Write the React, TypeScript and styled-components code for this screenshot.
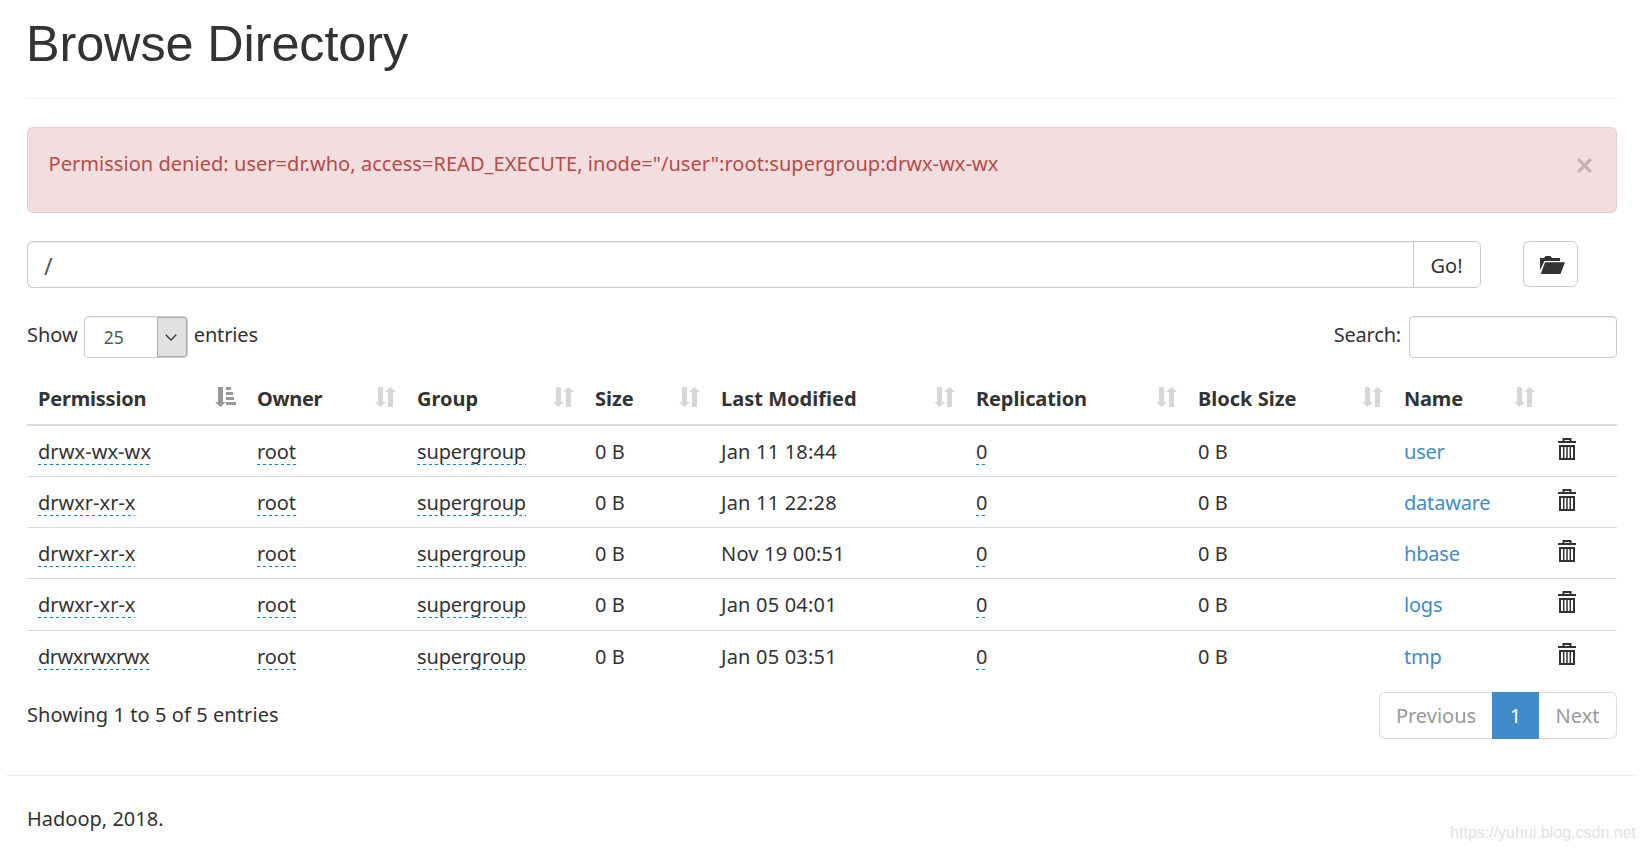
import React from "react";
import styled, { createGlobalStyle } from "styled-components";

const Global = createGlobalStyle`
  * { box-sizing: border-box; }
  body {
    margin: 0;
    background: #fff;
    color: #333;
    font: 20px/28px "Noto Sans", sans-serif;
    overflow: hidden;
  }
`;

const Page = styled.div`
  position: relative;
  height: 851px;
`;

const Container = styled.main`
  padding: 0 28px 0 27px;
`;

const Heading = styled.h1`
  margin: 0;
  height: 99px;
  padding-top: 16px;
  border-bottom: 1px solid #eee;
  font: 400 50.4px/56px "Liberation Sans", sans-serif;
  letter-spacing: -0.1px;
  text-indent: -1px;
`;

const T = styled.span<{ $ls?: number }>`
  letter-spacing: ${(p) => p.$ls ?? 0}px;
  white-space: nowrap;
`;

const Alert = styled.div`
  display: flex;
  justify-content: space-between;
  margin-top: 28px;
  height: 86px;
  padding: 22px 24px 0 20.5px;
  border: 1px solid #ebccd1;
  border-radius: 6px;
  background: #f2dede;
  color: #b94a48;
`;

const Close = styled.button`
  border: 0;
  padding: 0;
  margin-top: 8px;
  width: 15px;
  height: 15px;
  background: none;
  display: flex;
`;

const PathRow = styled.div`
  display: flex;
  align-items: flex-start;
  margin-top: 28px;
`;

const PathInput = styled.div`
  width: 1386px;
  height: 47px;
  padding: 11px 16px;
  border: 1px solid #ccc;
  border-right: 0;
  border-radius: 6px 0 0 6px;
  box-shadow: inset 0 1px 1px rgba(0, 0, 0, 0.075);
  color: #555;
  font-size: 23px;
  line-height: 26px;
`;

const Button = styled.button<{ $w: number; $h: number; $joined?: boolean }>`
  display: flex;
  align-items: center;
  justify-content: center;
  width: ${(p) => p.$w}px;
  height: ${(p) => p.$h}px;
  margin-left: ${(p) => (p.$joined ? 0 : 42)}px;
  padding: ${(p) => (p.$joined ? "2px 1px 0 0" : "2px 0 0 4px")};
  border: 1px solid #ccc;
  border-radius: ${(p) => (p.$joined ? "0 6px 6px 0" : "6px")};
  background: #fff;
  color: #333;
  font: inherit;
`;

const Controls = styled.div`
  display: flex;
  justify-content: space-between;
  margin-top: 28px;
  height: 42px;
`;

const Label = styled.label`
  display: flex;
  padding-top: 5px;
`;

const Select = styled.div`
  display: flex;
  justify-content: space-between;
  width: 104px;
  height: 42px;
  margin: -5px 6px 0;
  border: 1px solid #ccc;
  border-radius: 4px;
  box-shadow: inset 0 1px 1px rgba(0, 0, 0, 0.075);
  color: #555;
  font-size: 17.5px;
  line-height: 41px;
  padding-left: 19px;
`;

const SelectArrow = styled.span`
  display: flex;
  align-items: center;
  justify-content: center;
  width: 30px;
  height: 40px;
  padding-right: 2px;
  border: 1px solid #adadad;
  border-radius: 0 3px 3px 0;
  background: #e1e1e1;
`;

const SearchInput = styled.input`
  width: 208px;
  height: 42px;
  margin: -5px 0 0 8px;
  border: 1px solid #ccc;
  border-radius: 4px;
  box-shadow: inset 0 1px 1px rgba(0, 0, 0, 0.075);
`;

const Table = styled.table`
  width: 1590px;
  margin-top: 15px;
  border-collapse: separate;
  border-spacing: 0;
  table-layout: fixed;
`;

const Th = styled.th<{ $w: number }>`
  width: ${(p) => p.$w}px;
  height: 53px;
  padding: 0 10px 0 11px;
  border-bottom: 2px solid #ddd;
  text-align: left;
  font-weight: 700;
`;

const HeadCell = styled.div`
  display: flex;
  justify-content: space-between;
  align-items: flex-start;

  svg {
    margin-top: 2px;
  }
`;

const Row = styled.tr<{ $h: number; $last?: boolean }>`
  height: ${(p) => p.$h}px;
  td {
    padding: 12px 11px 0;
    vertical-align: top;
    border-bottom: ${(p) => (p.$last ? "0" : "1px solid #ddd")};
  }
  td:last-child {
    padding-left: 13px;
  }
`;

const Editable = styled.span<{ $ls?: number }>`
  display: inline-block;
  height: 28px;
  letter-spacing: ${(p) => p.$ls ?? 0}px;
  white-space: nowrap;
  background: linear-gradient(90deg, #08c 50%, transparent 50%) 0 26px / 6px 1px repeat-x;
`;

const Link = styled.a<{ $ls?: number }>`
  color: #428bca;
  letter-spacing: ${(p) => p.$ls ?? 0}px;
`;

const BottomRow = styled.div`
  display: flex;
  justify-content: space-between;
  height: 47px;
  margin-top: 10px;
`;

const Info = styled.div`
  padding-top: 9px;
`;

const Pagination = styled.div`
  display: flex;
`;

const PageItem = styled.span<{ $w: number; $active?: boolean; $pos?: "first" | "last" }>`
  width: ${(p) => p.$w}px;
  height: 47px;
  text-align: center;
  line-height: 46px;
  border: 1px solid ${(p) => (p.$active ? "#428bca" : "#ddd")};
  border-left-width: ${(p) => (p.$pos === "last" ? 0 : 1)}px;
  border-right-width: ${(p) => (p.$pos === "first" ? 0 : 1)}px;
  border-radius: ${(p) => (p.$pos === "first" ? "6px 0 0 6px" : p.$pos === "last" ? "0 6px 6px 0" : "0")};
  background: ${(p) => (p.$active ? "#428bca" : "#fff")};
  color: ${(p) => (p.$active ? "#fff" : "#999")};
`;

const Footer = styled.footer`
  margin: 36px 7px 0 6px;
  padding: 29px 21px 0;
  border-top: 1px solid #eee;
`;

const Watermark = styled.div`
  position: absolute;
  right: 9px;
  bottom: 8px;
  font: 16px/20px "Liberation Sans", sans-serif;
  color: #e2e2e2;
`;

const SortIcon = () => (
  <svg width="21" height="20" viewBox="0 0 21 20" fill="#d6d6d6">
    <path d="M3 0h5v15h3l-5.500 5L0 15h3zM13 20V5h-3l5.500-5L21 5h-3v15z" />
  </svg>
);

const SortedIcon = () => (
  <svg width="21" height="20" viewBox="0 0 21 20" fill="#999">
    <path d="M3 0h5v15h3l-5.500 5L0 15h3zM11 0h5v3h-5zM11 5h7v3h-7zM11 10h8v3h-8zM11 15h10v3H11z" />
  </svg>
);

const TrashIcon = () => (
  <svg width="18" height="22" viewBox="0 0 18 22" fill="none" stroke="#333">
    <path d="M5.500 3.500V1h7v2.500" strokeWidth="2" />
    <path d="M0 4h18" strokeWidth="2" />
    <path d="M2 8h14v13H2z" strokeWidth="2" />
    <path d="M5.700 8v12M9 8v12M12.300 8v12" strokeWidth="1.500" />
  </svg>
);

const FolderIcon = () => (
  <svg width="25" height="19" viewBox="0 0 25 19" fill="#333">
    <path d="M0 14V2h4l1.500-2h5L12 2h8v3H4.500z" />
    <path d="M5 6.200h20L20.500 18H.8z" />
  </svg>
);

const COLS: [string, number, number][] = [
  ["Permission", 219, -0.2],
  ["Owner", 160, -0.35],
  ["Group", 178, 0],
  ["Size", 126, 0],
  ["Last Modified", 255, 0.02],
  ["Replication", 222, -0.1],
  ["Block Size", 206, 0],
  ["Name", 152, -0.2],
];

const ROWS: [string, number, string, string, number][] = [
  ["drwx-wx-wx", 0.07, "Jan 11 18:44", "user", 51],
  ["drwxr-xr-x", 0, "Jan 11 22:28", "dataware", 51],
  ["drwxr-xr-x", 0, "Nov 19 00:51", "hbase", 51],
  ["drwxr-xr-x", 0, "Jan 05 04:01", "logs", 52],
  ["drwxrwxrwx", -0.5, "Jan 05 03:51", "tmp", 51],
];

export default function App() {
  return (
    <Page>
      <Global />
      <Container>
        <Heading>Browse Directory</Heading>
        <Alert>
          <T $ls={0.04}>
            Permission denied: user=dr.who, access=READ_EXECUTE, inode="/user":root:supergroup:drwx-wx-wx
          </T>
          <Close aria-label="Close">
            <svg width="15" height="15" viewBox="0 0 15 15" stroke="#c2b2b2" strokeWidth="3.200">
              <path d="M1.200 1.200l12.600 12.600M13.800 1.200L1.200 13.800" />
            </svg>
          </Close>
        </Alert>
        <PathRow>
          <PathInput>/</PathInput>
          <Button $w={68} $h={47} $joined>
            Go!
          </Button>
          <Button $w={55} $h={46} aria-label="Open folder">
            <FolderIcon />
          </Button>
        </PathRow>
        <Controls>
          <Label>
            <T>Show</T>
            <Select>
              25
              <SelectArrow>
                <svg width="12" height="7" viewBox="0 0 12 7" fill="none" stroke="#333" strokeWidth="1.300">
                  <path d="M.8.8L6 6 11.200.8" />
                </svg>
              </SelectArrow>
            </Select>
            <T $ls={-0.15}>entries</T>
          </Label>
          <Label>
            <T $ls={-0.2}>Search:</T>
            <SearchInput />
          </Label>
        </Controls>
        <Table>
          <thead>
            <tr>
              {COLS.map(([name, w, ls], i) => (
                <Th key={name} $w={w}>
                  <HeadCell>
                    <T $ls={ls}>{name}</T>
                    {i === 0 ? <SortedIcon /> : <SortIcon />}
                  </HeadCell>
                </Th>
              ))}
              <Th $w={72} />
            </tr>
          </thead>
          <tbody>
            {ROWS.map(([perm, ls, date, name, h], i) => (
              <Row key={name} $h={h} $last={i === ROWS.length - 1}>
                <td><Editable $ls={ls}>{perm}</Editable></td>
                <td><Editable $ls={-0.1}>root</Editable></td>
                <td><Editable $ls={-0.15}>supergroup</Editable></td>
                <td><T $ls={0.1}>0 B</T></td>
                <td><T $ls={0.2}>{date}</T></td>
                <td><Editable $ls={0.5}>0</Editable></td>
                <td>0 B</td>
                <td><Link $ls={-0.2}>{name}</Link></td>
                <td><TrashIcon /></td>
              </Row>
            ))}
          </tbody>
        </Table>
        <BottomRow>
          <Info><T $ls={0.08}>Showing 1 to 5 of 5 entries</T></Info>
          <Pagination>
            <PageItem $w={113} $pos="first"><T>Previous</T></PageItem>
            <PageItem $w={47} $active>1</PageItem>
            <PageItem $w={78} $pos="last"><T>Next</T></PageItem>
          </Pagination>
        </BottomRow>
      </Container>
      <Footer><T>Hadoop, 2018.</T></Footer>
      <Watermark>https://yuhui.blog.csdn.net</Watermark>
    </Page>
  );
}
